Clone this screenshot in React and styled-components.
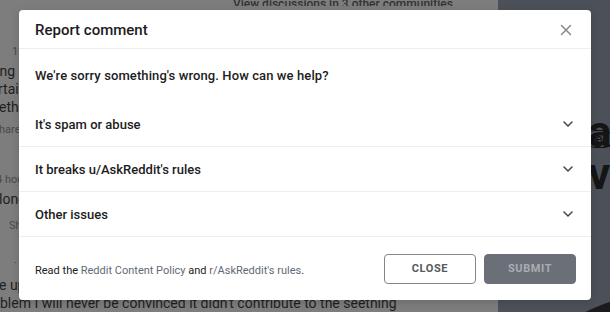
import React from 'react';
import styled, { createGlobalStyle } from 'styled-components';

const GlobalStyle = createGlobalStyle`
  html, body {
    margin: 0;
    padding: 0;
    width: 610px;
    height: 312px;
    overflow: hidden;
    font-family: Roboto, 'Noto Sans', sans-serif;
  }
`;

const Page = styled.div`
  position: relative;
  display: flex;
  width: 610px;
  height: 312px;
  overflow: hidden;
  background: #7b7b7b;
`;

const Feed = styled.div`
  width: 498px;
  display: flex;
  flex-direction: column;
  color: #222;
  overflow: hidden;
  background: #7d7d7d;
`;

const TopNote = styled.div`
  height: 10px;
  line-height: 8px;
  padding-left: 233px;
  font-size: 12px;
  font-weight: 500;
  color: #333;
  white-space: nowrap;
  overflow: hidden;
`;

const Line = styled.div`
  white-space: nowrap;
  font-size: ${p => (p.small ? '11px' : '14px')};
  color: ${p => (p.small ? '#4a4a4a' : '#1f1f1f')};
  margin-left: ${p => p.indent || 0}px;
  margin-top: ${p => p.gap || 0}px;
  line-height: ${p => (p.small ? '16px' : '18px')};
`;

const Sidebar = styled.div`
  flex: 1;
  position: relative;
  background: #4c5159;
  overflow: hidden;
`;

const BigText = styled.div`
  font-size: 44px;
  font-weight: 700;
  color: #151515;
  line-height: 40px;
  padding-left: 90px;
  margin-top: ${p => p.top}px;
`;

const Pill = styled.div`
  position: absolute;
  left: 88px;
  top: 130px;
  border: 1.5px solid #111;
  border-radius: 12px;
  padding: 0 10px 0 4px;
  font-size: 13px;
  font-weight: 500;
  color: #111;
  line-height: 16px;
`;

const Shade = styled.div`
  position: absolute;
  left: 40px;
  top: 292px;
  width: 200px;
  height: 80px;
  background: #1b1b1b;
  border-radius: 70% 0 0 0;
  transform: rotate(-8deg);
`;

const Modal = styled.div`
  position: absolute;
  left: 19px;
  top: 10px;
  width: 572px;
  height: 290px;
  background: #fff;
  border-radius: 4px;
  display: flex;
  flex-direction: column;
  box-shadow: 0 2px 8px rgba(0, 0, 0, 0.15);
`;

const Header = styled.div`
  height: 38px;
  display: flex;
  align-items: center;
  justify-content: space-between;
  padding: 0 16px 0 16px;
  border-bottom: 1px solid #edeff1;
`;

const Title = styled.div`
  font-size: 15px;
  font-weight: 500;
  color: #1c1c1c;
  margin-top: 1px;
`;

const IconButton = styled.button`
  border: none;
  background: none;
  padding: 0;
  width: 18px;
  height: 18px;
  display: flex;
  align-items: center;
  justify-content: center;
  color: #878a8c;
  margin-top: 1px;
`;

const Question = styled.div`
  height: 53px;
  display: flex;
  align-items: center;
  padding: 0 16px;
  font-size: 13px;
  font-weight: 500;
  color: #1c1c1c;
  letter-spacing: 0.1px;
`;

const Option = styled.div`
  height: 44px;
  display: flex;
  align-items: center;
  justify-content: space-between;
  padding: 0 16px;
  border-bottom: 1px solid #edeff1;
  font-size: 13px;
  font-weight: 500;
  color: #1c1c1c;
`;

const Footer = styled.div`
  flex: 1;
  display: flex;
  align-items: center;
  justify-content: space-between;
  padding: 0 15px 0 16px;
`;

const Fine = styled.div`
  font-size: 11px;
  color: #1c1c1c;
  margin-top: 3px;
`;

const FineLink = styled.span`
  color: #5f6a75;
`;

const Buttons = styled.div`
  display: flex;
  gap: 8px;
`;

const Btn = styled.button`
  width: 92px;
  height: 30px;
  border-radius: 4px;
  font-family: Roboto, sans-serif;
  font-size: 11px;
  font-weight: 700;
  letter-spacing: 0.6px;
  border: 1px solid ${p => (p.primary ? '#6b7078' : '#83878c')};
  background: ${p => (p.primary ? '#6b7078' : '#fff')};
  color: ${p => (p.primary ? '#a9adb2' : '#56595d')};
`;

const Chevron = () => (
  <svg width="14" height="14" viewBox="0 0 14 14" fill="none">
    <path d="M3 5 L7 9 L11 5" stroke="#4a4d50" strokeWidth="1.6" strokeLinecap="round" strokeLinejoin="round" />
  </svg>
);

const options = ["It's spam or abuse", "It breaks u/AskReddit's rules", 'Other issues'];

export default function App() {
  return (
    <>
      <GlobalStyle />
      <Page>
        <Feed>
          <TopNote>View discussions in 3 other communities</TopNote>
          <Line small indent={12} gap={38}>18</Line>
          <Line indent={-4} gap={2}>ing something s</Line>
          <Line indent={-2}>rtain</Line>
          <Line indent={-1}>ether</Line>
          <Line small indent={-1} gap={6}>hare</Line>
          <Line small indent={-4} gap={34}>4 hours</Line>
          <Line indent={-1} gap={2}>lonely</Line>
          <Line small indent={9} gap={10}>Share</Line>
          <Line small indent={14} gap={22}>· 1</Line>
          <Line indent={-1} gap={4}>e up</Line>
          <Line indent={0}>blem I will never be convinced it didn't contribute to the seething</Line>
        </Feed>
        <Sidebar>
          <BigText top={112}>ar</BigText>
          <BigText top={2}>v</BigText>
          <Pill>re</Pill>
          <Shade />
        </Sidebar>
        <Modal>
          <Header>
            <Title>Report comment</Title>
            <IconButton aria-label="close">
              <svg width="12" height="12" viewBox="0 0 12 12">
                <path d="M1.5 1.5 L10.5 10.5 M10.5 1.5 L1.5 10.5" stroke="#878a8c" strokeWidth="1.5" strokeLinecap="round" />
              </svg>
            </IconButton>
          </Header>
          <Question>We're sorry something's wrong. How can we help?</Question>
          {options.map(o => (
            <Option key={o}>
              {o}
              <Chevron />
            </Option>
          ))}
          <Footer>
            <Fine>
              Read the <FineLink>Reddit Content Policy</FineLink> and <FineLink>r/AskReddit's rules</FineLink>.
            </Fine>
            <Buttons>
              <Btn>CLOSE</Btn>
              <Btn primary>SUBMIT</Btn>
            </Buttons>
          </Footer>
        </Modal>
      </Page>
    </>
  );
}
